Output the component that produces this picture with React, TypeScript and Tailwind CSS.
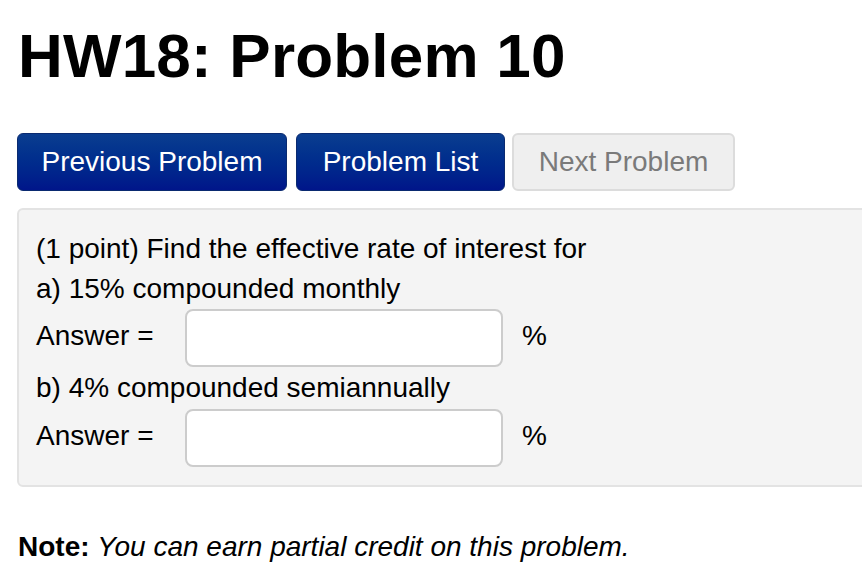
import React from "react";

const font = { fontFamily: '"Liberation Sans", Arial, Helvetica, sans-serif' };

function AnswerRow() {
  return (
    <div className="flex items-center h-[58px]">
      <span className="w-[149px] text-[28px] leading-[40px] -mt-[4px]">Answer =</span>
      <input
        type="text"
        className="w-[318px] h-[58px] bg-white border-2 border-[#cccccc] rounded-[8px] outline-none"
      />
      <span className="ml-[19px] text-[28px] leading-[40px] -mt-[4px]">%</span>
    </div>
  );
}

export default function App() {
  return (
    <div
      className="w-[862px] h-[570px] overflow-hidden bg-white text-black"
      style={font}
    >
      <h1 className="ml-[18px] mt-[22px] text-[62px] leading-[68px] font-bold tracking-[0.2px]">
        HW18: Problem 10
      </h1>
      <div className="flex mt-[43px] ml-[17px]">
        <button className="w-[270px] h-[58px] rounded-[6px] border border-[#0a2a70] bg-gradient-to-b from-[#0b3d8f] to-[#00158a] text-white text-[28px]">
          Previous Problem
        </button>
        <button className="ml-[9px] w-[209px] h-[58px] rounded-[6px] border border-[#0a2a70] bg-gradient-to-b from-[#0b3d8f] to-[#00158a] text-white text-[28px]">
          Problem List
        </button>
        <button className="ml-[7px] w-[223px] h-[58px] rounded-[6px] border-2 border-[#dcdcdc] bg-[#efefef] text-[#7a7a7a] text-[28px]">
          Next Problem
        </button>
      </div>
      <div className="mt-[17px] ml-[17px] w-[900px] h-[279px] bg-[#f4f4f4] border-2 border-[#e3e3e3] rounded-[6px] pl-[17px] pt-[19px]">
        <div className="text-[28px] leading-[40px]">
          (1 point) Find the effective rate of interest for
        </div>
        <div className="text-[28px] leading-[40px]">a) 15% compounded monthly</div>
        <AnswerRow />
        <div className="text-[28px] leading-[40px] mt-[1px]">b) 4% compounded semiannually</div>
        <div className="mt-[1px]">
          <AnswerRow />
        </div>
      </div>
      <div className="mt-[40px] ml-[18px] text-[28px] leading-[40px]">
        <span className="font-bold">Note:</span>{" "}
        <i>You can earn partial credit on this problem.</i>
      </div>
    </div>
  );
}
